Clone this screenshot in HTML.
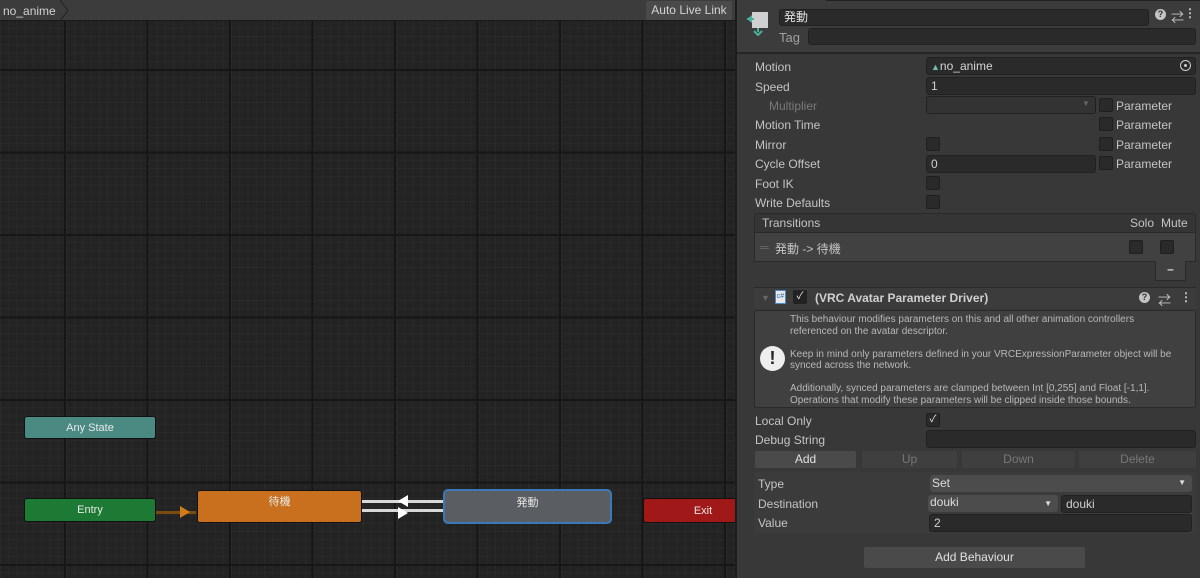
<!DOCTYPE html>
<html><head><meta charset="utf-8"><style>
*{box-sizing:border-box;margin:0;padding:0}
body{width:1200px;height:578px;overflow:hidden;background:#383838;font-family:"Liberation Sans","Noto Sans CJK JP",sans-serif;font-size:12px;color:#c4c4c4;position:relative}
.a{position:absolute}
#graph{left:0;top:0;width:735px;height:578px;background-color:#232323;
background-image:linear-gradient(90deg,#161616 0 2px,transparent 2px),linear-gradient(#161616 0 2px,transparent 2px),linear-gradient(90deg,#2a2a2a 0 1px,transparent 1px),linear-gradient(#2a2a2a 0 1px,transparent 1px);
background-size:82.5px 82.5px,82.5px 82.5px,8.25px 8.25px,8.25px 8.25px;background-position:64px 69px,64px 69px,0 0,0 3px;overflow:hidden}
.tb{left:0;top:0;width:735px;height:21px;background:#3c3c3c;border-bottom:1px solid #1a1a1a}
.node{position:absolute;border-radius:3px;color:#e8e8e8;font-size:11px;text-align:center;border:1px solid #111}
.lbl{position:absolute;left:755px;color:#c4c4c4}
.fld{position:absolute;background:#2a2a2a;border:1px solid #212121;border-radius:3px;color:#d0d0d0;padding-left:4px;line-height:16px;height:18px}
.cb{position:absolute;width:14px;height:14px;background:#2a2a2a;border:1px solid #1f1f1f;border-radius:2px}
.pl{position:absolute;color:#c4c4c4}
.btn{position:absolute;height:17px;background:#4a4a4a;border-radius:2px;text-align:center;line-height:17px;color:#e0e0e0}
.btn.d{background:#3f3f3f;color:#777}
</style></head><body>
<div id="graph" class="a">
 <div class="a tb"><span class="a" style="left:3px;top:4px;color:#d0d0d0">no_anime</span>
  <svg class="a" style="left:60px;top:0" width="10" height="21"><path d="M0 0 L8 10.5 L0 21" fill="#3c3c3c" stroke="#222"/></svg>
  <div class="a" style="left:646px;top:1px;width:86px;height:19px;background:#4a4a4a;color:#d4d4d4;line-height:19px;text-align:center">Auto Live Link</div>
 </div>
 <div class="node" style="left:24px;top:416px;width:132px;height:23px;background:#4a8a82;line-height:22px">Any State</div>
 <div class="node" style="left:24px;top:498px;width:132px;height:24px;background:#1d7a34;line-height:23px">Entry</div>
 <div class="a" style="left:156px;top:511px;width:40px;height:3px;background:#7a4a10"></div>
 <svg class="a" style="left:180px;top:506px" width="12" height="12"><path d="M0 0 L10 6 L0 12Z" fill="#d07a1a"/></svg>
 <div class="node" style="left:197px;top:490px;width:165px;height:33px;background:#c8701e;line-height:22px">待機</div>
 <div class="a" style="left:362px;top:500px;width:82px;height:3px;background:#d8d8d8"></div>
 <div class="a" style="left:362px;top:509px;width:82px;height:3px;background:#d8d8d8"></div>
 <svg class="a" style="left:398px;top:495px" width="12" height="24"><path d="M10 0 L0 6 L10 12Z M0 12 L10 18 L0 24Z" fill="#fff"/></svg>
 <div class="node" style="left:443px;top:489px;width:169px;height:35px;background:#5a5e62;border:2px solid #3a7ab8;line-height:24px;border-radius:5px">発動</div>
 <div class="node" style="left:643px;top:498px;width:95px;height:25px;background:#a01818;line-height:24px;padding-left:25px">Exit</div>
</div>
<div class="a" style="left:735px;top:0;width:2px;height:578px;background:#1c1c1c"></div>
<div class="a" style="left:737px;top:0;width:463px;height:54px;background:#3c3c3c;border-bottom:2px solid #262626"></div>
<div class="a" style="left:826px;top:0;width:374px;height:1px;background:#222"></div>
<svg class="a" style="left:745px;top:10px" width="26" height="26"><rect x="7" y="2" width="16" height="16" fill="#d0d0d0"/><path d="M2 9 L7 5 V13Z" fill="#4ab0a0"/><path d="M2 9 H9" stroke="#4ab0a0" stroke-width="2"/><path d="M13 18 V22 M9 21 L13 25 L17 21" stroke="#4ab0a0" stroke-width="2" fill="none"/></svg>
<div class="fld" style="left:779px;top:9px;width:370px;height:17px;color:#e0e0e0;line-height:15px">発動</div>
<div class="a" style="left:1155px;top:9px;width:11px;height:11px;border-radius:50%;background:#c4c4c4;color:#333;font-size:9px;font-weight:bold;text-align:center;line-height:11px">?</div>
<div class="a" style="left:1171px;top:7px;color:#c4c4c4;font-size:13px">⇄</div>
<div class="a" style="left:1184px;top:6px;color:#c4c4c4;font-weight:bold">⋮</div>
<div class="a" style="left:779px;top:30px;color:#a0a0a0;font-size:13px">Tag</div>
<div class="fld" style="left:808px;top:28px;width:388px;height:17px"></div>

<div class="lbl" style="top:60px">Motion</div>
<div class="fld" style="left:926px;top:57px;width:270px;color:#d4d4d4"><span style="color:#6ac0b0;font-size:9px">▲</span>no_anime</div>
<div class="a" style="left:1180px;top:60px;width:11px;height:11px;border:1px solid #ccc;border-radius:50%"><div style="margin:3px;width:3px;height:3px;background:#ccc;border-radius:50%"></div></div>
<div class="lbl" style="top:80px">Speed</div>
<div class="fld" style="left:926px;top:77px;width:270px">1</div>
<div class="lbl" style="top:99px;left:769px;color:#7a7a7a">Multiplier</div>
<div class="fld" style="left:926px;top:96px;width:170px;background:#333"></div>
<div class="a" style="left:1082px;top:99px;color:#666;font-size:8px">▼</div>
<div class="lbl" style="top:118px">Motion Time</div>
<div class="lbl" style="top:138px">Mirror</div>
<div class="lbl" style="top:157px">Cycle Offset</div>
<div class="fld" style="left:926px;top:155px;width:170px">0</div>
<div class="lbl" style="top:177px">Foot IK</div>
<div class="lbl" style="top:196px">Write Defaults</div>
<div class="cb" style="left:1099px;top:98px"></div><div class="pl" style="left:1116px;top:99px">Parameter</div>
<div class="cb" style="left:1099px;top:117px"></div><div class="pl" style="left:1116px;top:118px">Parameter</div>
<div class="cb" style="left:1099px;top:137px"></div><div class="pl" style="left:1116px;top:138px">Parameter</div>
<div class="cb" style="left:1099px;top:156px"></div><div class="pl" style="left:1116px;top:157px">Parameter</div>
<div class="cb" style="left:926px;top:137px"></div>
<div class="cb" style="left:926px;top:176px"></div>
<div class="cb" style="left:926px;top:195px"></div>

<div class="a" style="left:754px;top:213px;width:442px;height:20px;background:#353535;border:1px solid #2a2a2a;border-radius:3px 3px 0 0"></div>
<div class="a" style="left:762px;top:216px">Transitions</div>
<div class="a" style="left:1130px;top:216px">Solo</div>
<div class="a" style="left:1161px;top:216px">Mute</div>
<div class="a" style="left:754px;top:232px;width:442px;height:30px;background:#414141;border:1px solid #2a2a2a"></div>
<div class="a" style="left:760px;top:240px;color:#666">═</div>
<div class="a" style="left:775px;top:240px">発動 -&gt; 待機</div>
<div class="cb" style="left:1129px;top:240px"></div>
<div class="cb" style="left:1160px;top:240px"></div>
<div class="a" style="left:1155px;top:261px;width:31px;height:20px;background:#414141;border:1px solid #2a2a2a;border-top:none;text-align:center;color:#ddd;font-weight:bold;line-height:16px">–</div>

<div class="a" style="left:754px;top:287px;width:442px;height:22px;background:#3c3c3c;border-top:1px solid #2a2a2a"></div>
<div class="a" style="left:761px;top:293px;color:#666;font-size:9px">▼</div>
<div class="a" style="left:775px;top:290px;width:11px;height:14px;background:#e8e8e8;border:1px solid #4a8ac8;font-size:7px;color:#2a6aa8;text-align:center;line-height:12px">c#</div>
<div class="a" style="left:793px;top:290px;width:14px;height:14px;background:#222;border-radius:2px;color:#eee;font-size:10px;text-align:center;line-height:14px">✓</div>
<div class="a" style="left:815px;top:291px;font-weight:bold;color:#d0d0d0">(VRC Avatar Parameter Driver)</div>
<div class="a" style="left:1139px;top:292px;width:11px;height:11px;border-radius:50%;background:#c4c4c4;color:#333;font-size:9px;font-weight:bold;text-align:center;line-height:11px">?</div>
<div class="a" style="left:1158px;top:290px;font-size:13px">⇄</div>
<div class="a" style="left:1180px;top:290px;font-weight:bold">⋮</div>

<div class="a" style="left:754px;top:310px;width:442px;height:98px;background:#404040;border:1px solid #2a2a2a;border-radius:3px;font-size:10px;color:#b8b8b8;line-height:11.5px;padding:3px 0 0 35px">
This behaviour modifies parameters on this and all other animation controllers<br>referenced on the avatar descriptor.<br><br>Keep in mind only parameters defined in your VRCExpressionParameter object will be<br>synced across the network.<br><br>Additionally, synced parameters are clamped between Int [0,255] and Float [-1,1].<br>Operations that modify these parameters will be clipped inside those bounds.</div>
<div class="a" style="left:760px;top:346px;width:25px;height:25px;border-radius:50%;background:#eee;color:#222;font-weight:bold;font-size:18px;text-align:center;line-height:25px">!</div>

<div class="lbl" style="top:414px">Local Only</div>
<div class="cb" style="left:926px;top:413px;color:#eee;font-size:10px;line-height:12px;text-align:center">✓</div>
<div class="lbl" style="top:433px">Debug String</div>
<div class="fld" style="left:926px;top:430px;width:270px"></div>
<div class="btn" style="left:755px;top:451px;width:101px">Add</div>
<div class="btn d" style="left:862px;top:451px;width:95px">Up</div>
<div class="btn d" style="left:962px;top:451px;width:113px">Down</div>
<div class="btn d" style="left:1079px;top:451px;width:117px">Delete</div>
<div class="a" style="left:754px;top:472px;width:442px;height:62px;background:#3b3b3b"></div>
<div class="lbl" style="top:477px;left:758px">Type</div>
<div class="a" style="left:930px;top:475px;width:262px;height:17px;background:#4c4c4c;border-radius:3px;padding-left:2px;color:#ddd;line-height:16px">Set<span style="position:absolute;right:6px;font-size:8px">▼</span></div>
<div class="lbl" style="top:497px;left:758px">Destination</div>
<div class="a" style="left:928px;top:495px;width:130px;height:17px;background:#4c4c4c;border-radius:3px;padding-left:2px;color:#ddd;line-height:14px">douki<span style="position:absolute;right:6px;font-size:8px;top:2px">▼</span></div>
<div class="fld" style="left:1061px;top:495px;width:131px">douki</div>
<div class="lbl" style="top:516px;left:758px">Value</div>
<div class="fld" style="left:929px;top:514px;width:263px">2</div>
<div class="btn" style="left:864px;top:547px;width:221px;height:21px;line-height:21px">Add Behaviour</div>
</body></html>
